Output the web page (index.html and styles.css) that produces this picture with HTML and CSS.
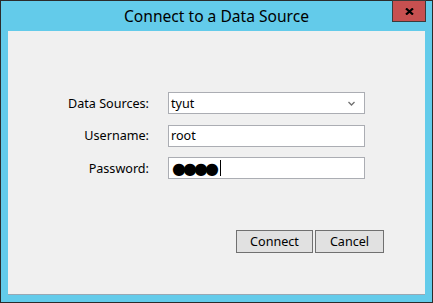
FILE: index.html
```html
<!DOCTYPE html>
<html lang="en">
<head>
    <meta charset="UTF-8">
    <title>Connect to a Data Source</title>
    <link rel="stylesheet" href="styles.css">
</head>
<body>

    <div class="window">
        <!-- Title bar -->
        <div class="title-bar">
            <span class="title">Connect to a Data Source</span>
            <button class="close-button" type="button" aria-label="Close">
                <svg width="9" height="7" viewBox="0 0 9 7">
                    <path d="M1 0.5 L8 6.5 M8 0.5 L1 6.5" stroke="#000" stroke-width="2.2" fill="none"/>
                </svg>
            </button>
        </div>

        <div class="content">
            <form class="connect-form">
                <label class="field-label">Data Sources:</label>
                <div class="field select-field">
                    <span>tyut</span>
                    <svg class="chevron" width="7" height="5" viewBox="0 0 7 5">
                        <path d="M0.5 1 L3.5 4 L6.5 1" stroke="#707070" stroke-width="1.3" fill="none"/>
                    </svg>
                </div>

                <label class="field-label">Username:</label>
                <div class="field">root</div>

                <label class="field-label">Password:</label>
                <div class="field password-field">
                    <span class="dots">●●●●</span><span class="caret"></span>
                </div>
            </form>

            <div class="button-row">
                <button class="button" type="button">Connect</button>
                <button class="button cancel" type="button">Cancel</button>
            </div>
        </div>
    </div>

</body>
</html>
```

FILE: styles.css
```css
body {
    margin: 0;
    padding: 0;
    font-family: "Noto Sans", "Open Sans", sans-serif;
    background-color: #fff;
}
.window {
    width: 433px;
    height: 303px;
    box-sizing: border-box;
    border: 1px solid #2b2b2b;
    background-color: #63cbea;
    padding: 0 7px 7px 7px;
    display: flex;
    flex-direction: column;
}
.title-bar {
    height: 30px;
    display: flex;
    justify-content: center;
    align-items: center;
    position: relative;
}
.title {
    font-size: 15.6px;
    color: #000;
    margin-top: -1px;
}
.close-button {
    position: absolute;
    top: -1px;
    right: -1px;
    width: 34px;
    height: 22px;
    background-color: #c75050;
    border: 1px solid #3b3b3b;
    padding: 0;
    display: flex;
    align-items: center;
    justify-content: center;
}
.content {
    flex: 1;
    background-color: #f0f0f0;
    border-bottom: 1px solid #98a8b4;
}

/* Form grid */
.connect-form {
    display: grid;
    grid-template-columns: 141px 197px;
    grid-auto-rows: 22px;
    column-gap: 19px;
    row-gap: 10.5px;
    margin: 61px 0 0 0;
    font-size: 12.6px;
}
.field-label {
    text-align: right;
    align-self: center;
    color: #000;
}
.field {
    box-sizing: border-box;
    border: 1px solid #abadb3;
    background-color: #fff;
    padding: 0 2px;
    display: flex;
    align-items: center;
    font-size: 12.6px;
    color: #000;
}
.select-field {
    justify-content: space-between;
}
.chevron {
    margin-right: 7px;
}
.dots {
    font-family: "DejaVu Sans", sans-serif;
    font-size: 16px;
    letter-spacing: -3px;
    margin-left: 1px;
}
.caret {
    width: 1px;
    height: 16px;
    margin-left: 4px;
    background-color: #000;
}

/* Buttons */
.button-row {
    display: flex;
    justify-content: flex-end;
    gap: 2px;
    margin-top: 51px;
    padding-right: 41px;
}
.button {
    width: 77px;
    height: 23px;
    background-color: #e1e1e1;
    border: 1px solid #707070;
    font-family: "Noto Sans", "Open Sans", sans-serif;
    font-size: 12.6px;
    color: #000;
    padding: 0;
}
.button.cancel {
    width: 69px;
}
```
